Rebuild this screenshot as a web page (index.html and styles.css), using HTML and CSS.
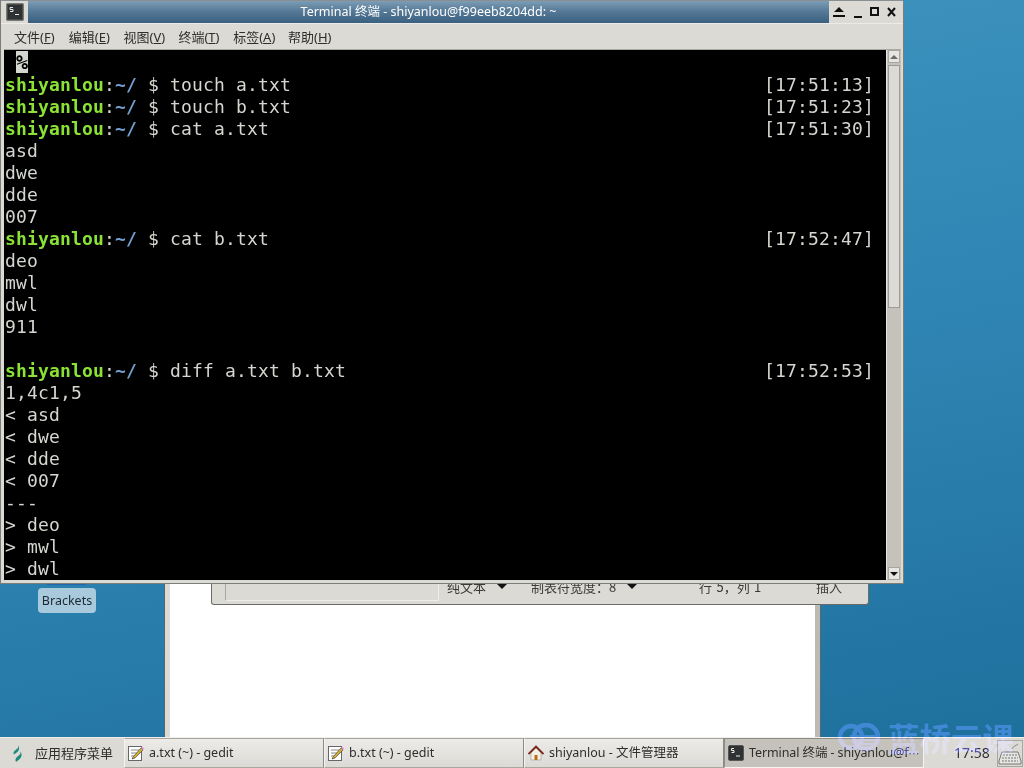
FILE: index.html
```html
<!DOCTYPE html>
<html lang="zh">
<head>
<meta charset="utf-8">
<title>Terminal</title>
<link rel="stylesheet" href="styles.css">
</head>
<body>
<div class="desktop">
  <div class="desk-icon"><div class="desk-icon-art"></div><div class="desk-icon-label">Brackets</div></div>

  <div class="gedit-back"></div>
  <div class="gedit-status">
    <div class="gs-field"></div>
    <span class="gs-item gs-plain">纯文本<i class="arrow"></i></span>
    <span class="gs-item gs-tab">制表符宽度：8<i class="arrow"></i></span>
    <span class="gs-item gs-pos">行 5，列 1</span>
    <span class="gs-item gs-ins">插入</span>
  </div>

  <div class="term-win">
    <div class="titlebar">
      <div class="win-icon"><svg width="18" height="18" viewBox="0 0 18 18"><rect x="0.5" y="0.5" width="17" height="17" rx="1" fill="#2e3232" stroke="#777b78"/><rect x="1.500" y="1.500" width="15" height="15" fill="none" stroke="#4a4e4e"/><path d="M4 4.500h3M4 6.500h3M4 4.500v2M7 6.500v2H4" stroke="#e8e8e8" fill="none"/><path d="M9 11.500h4" stroke="#e8e8e8"/></svg></div>
      <div class="title-text">Terminal 终端 - shiyanlou@f99eeb8204dd: ~</div>
      <div class="win-btns">
        <svg width="74" height="22" viewBox="0 0 74 22">
          <path d="M5 11l5-5 5 5z M4 14h12v2H4z" fill="#111"/>
          <path d="M25 15h8v2h-8z" fill="#111"/>
          <path d="M42 7h7v7h-7z" fill="none" stroke="#111" stroke-width="2"/>
          <path d="M59 7l7 8M66 7l-7 8" stroke="#111" stroke-width="2"/>
        </svg>
      </div>
    </div>
    <div class="menubar">
      <span class="menu-item">文件(<u>F</u>)</span><span class="menu-item">编辑(<u>E</u>)</span><span class="menu-item">视图(<u>V</u>)</span><span class="menu-item">终端(<u>T</u>)</span><span class="menu-item">标签(<u>A</u>)</span><span class="menu-item">帮助(<u>H</u>)</span>
    </div>
    <div class="term-body">
      <div class="term-screen">
        <div class="line"><span class="percent">%</span></div>
        <div class="line"><span><b class="g">shiyanlou</b><span>:</span><b class="b">~/</b> $ touch a.txt</span><span>[17:51:13]</span></div>
        <div class="line"><span><b class="g">shiyanlou</b><span>:</span><b class="b">~/</b> $ touch b.txt</span><span>[17:51:23]</span></div>
        <div class="line"><span><b class="g">shiyanlou</b><span>:</span><b class="b">~/</b> $ cat a.txt</span><span>[17:51:30]</span></div>
        <div class="line">asd</div>
        <div class="line">dwe</div>
        <div class="line">dde</div>
        <div class="line">007</div>
        <div class="line"><span><b class="g">shiyanlou</b><span>:</span><b class="b">~/</b> $ cat b.txt</span><span>[17:52:47]</span></div>
        <div class="line">deo</div>
        <div class="line">mwl</div>
        <div class="line">dwl</div>
        <div class="line">911</div>
        <div class="line"></div>
        <div class="line"><span><b class="g">shiyanlou</b><span>:</span><b class="b">~/</b> $ diff a.txt b.txt</span><span>[17:52:53]</span></div>
        <div class="line">1,4c1,5</div>
        <div class="line">&lt; asd</div>
        <div class="line">&lt; dwe</div>
        <div class="line">&lt; dde</div>
        <div class="line">&lt; 007</div>
        <div class="line">---</div>
        <div class="line">&gt; deo</div>
        <div class="line">&gt; mwl</div>
        <div class="line">&gt; dwl</div>
      </div>
      <div class="scrollbar">
        <div class="sb-btn"><i class="sb-up"></i></div>
        <div class="sb-thumb"></div>
        <div class="sb-track"></div>
        <div class="sb-btn"><i class="sb-down"></i></div>
      </div>
    </div>
  </div>

  <div class="taskbar">
    <div class="app-menu">
      <svg width="12" height="17" viewBox="0 0 12 17"><path d="M7.500 0C8 2.500 6 4 4 5.500 2.500 6.700 2 8 3 9.500 5.500 7.500 8 6.500 8 3.500 8 2 8 1 7.500 0z M9.500 6.500C10 9 8 10.500 6 12 4.500 13.200 4 15 5 17 7.500 15 11 13 10.500 9.500 10.300 8 10 7 9.500 6.500z" fill="#1d8a7c"/></svg>
      <span>应用程序菜单</span>
    </div>
    <div class="task"><svg class="t-ico" width="16" height="16" viewBox="0 0 16 16"><rect x="0.500" y="1.500" width="13" height="14" fill="#fff" stroke="#666"/><path d="M3 5h8M3 8h6M3 11h5" stroke="#888"/><path d="M5 12L13 3l2 2-8 8-3 1z" fill="#d8b030" stroke="#333" stroke-width="0.600"/><path d="M13 3l1-1.500 2 2-1 1.500z" fill="#e090d0"/></svg><span>a.txt (~) - gedit</span></div>
    <div class="task"><svg class="t-ico" width="16" height="16" viewBox="0 0 16 16"><rect x="0.500" y="1.500" width="13" height="14" fill="#fff" stroke="#666"/><path d="M3 5h8M3 8h6M3 11h5" stroke="#888"/><path d="M5 12L13 3l2 2-8 8-3 1z" fill="#d8b030" stroke="#333" stroke-width="0.600"/><path d="M13 3l1-1.500 2 2-1 1.500z" fill="#e090d0"/></svg><span>b.txt (~) - gedit</span></div>
    <div class="task"><svg class="t-ico" width="16" height="16" viewBox="0 0 16 16"><path d="M3 8v7h10V8L8 3z" fill="#f2efe6" stroke="#999" stroke-width="0.600"/><path d="M0.500 9L8 1.500 15.500 9" fill="none" stroke="#7a2418" stroke-width="1.800"/><rect x="6.500" y="10" width="3" height="5" fill="#c06a1c"/></svg><span>shiyanlou - 文件管理器</span></div>
    <div class="task task-active"><svg class="t-ico" width="16" height="16" viewBox="0 0 16 16"><rect x="0.500" y="0.500" width="15" height="15" rx="1.500" fill="#2e3232" stroke="#555"/><path d="M3.500 3.500h2.500M3.500 5.500h2.500M3.500 3.500v2M6 5.500v2H3.500" stroke="#eee" fill="none"/><path d="M8 11h4" stroke="#eee"/></svg><span class="task-label-tight">Terminal 终端 - shiyanlou@f<span class="ell">⋯</span></span></div>
    <div class="clock">17:58</div>
    <div class="kbd"><svg width="24" height="24" viewBox="0 0 24 24"><path d="M14 7c1-3 4-3 6-5" fill="none" stroke="#888"/><path d="M4 10h16l3 9v3H1v-3z" fill="#e6e6e2" stroke="#777"/><path d="M5 13h14M4 16h16M4 19h16" stroke="#999" stroke-width="1.500" stroke-dasharray="2 1"/></svg></div>
  </div>

  <div class="watermark">
    <svg class="wm-logo" width="43" height="28" viewBox="0 0 43 28"><circle cx="13" cy="14" r="11" fill="none" stroke="#26288f" stroke-width="4.500"/><circle cx="28" cy="14" r="12" fill="none" stroke="#26288f" stroke-width="4.500"/><path d="M12 13h30M14 17h26M17 21h20" stroke="#26288f" stroke-width="2"/></svg>
    <span class="wm-text">蓝桥云课</span>
  </div>
</div>
</body>
</html>
```
FILE: styles.css
```css
* { box-sizing: border-box; }
html, body { margin: 0; padding: 0; }
body { width: 1024px; height: 768px; overflow: hidden; font-family: "Liberation Sans", "Noto Sans CJK SC", sans-serif; }
.desktop { position: relative; width: 1024px; height: 768px; overflow: hidden; background: linear-gradient(170deg, #4097c0 0%, #2f85b3 50%, #1d6f9b 100%); }

.desk-icon { position: absolute; left: 38px; top: 560px; width: 58px; }
.desk-icon-art { position: absolute; left: 7px; top: 20px; width: 43px; height: 5px; background: #1e66b4; border-radius: 0 0 4px 4px; }
.desk-icon-label { position: absolute; left: 0; top: 28px; width: 58px; height: 25px; border-radius: 4px; background: #a9c9dd; color: #1c2a33; font: 12.500px/25px "Noto Sans", sans-serif; text-align: center; }

.gedit-back { position: absolute; left: 164px; top: 300px; width: 657px; height: 437px; background: #fff; border-left: 1px solid #58666e; border-right: 1px solid #58666e; box-shadow: inset 5px 0 0 #dcdad5, inset -5px 0 0 #bdbab3; }
.gedit-status { position: absolute; left: 211px; top: 540px; width: 658px; height: 65px; background: #dcdad5; border: 1px solid #6a6a66; border-top: 0; border-radius: 0 0 3px 3px; }
.gs-field { position: absolute; left: 13px; top: 20px; width: 214px; height: 41px; border-left: 1px solid #a8a69f; border-right: 1px solid #eeede9; border-bottom: 1px solid #eeede9; }
.gs-item { position: absolute; top: 38px; font: 13px/18px "Noto Sans CJK SC", sans-serif; color: #3a3a38; white-space: nowrap; }
.gs-plain { left: 235px; }
.gs-tab { left: 319px; }
.gs-pos { left: 487px; word-spacing: 1.500px; }
.gs-ins { left: 604px; }
.arrow { display: inline-block; margin-left: 11px; vertical-align: 3px; border-left: 5px solid transparent; border-right: 5px solid transparent; border-top: 5px solid #111; }

.term-win { position: absolute; left: 0; top: 0; width: 904px; height: 584px; background: #dcdad5; border: 1px solid #7d7d78; border-top: 0; border-radius: 0 4px 0 0; display: flex; flex-direction: column; }
.titlebar { display: flex; height: 23px; border-top: 1px solid #8a8f93; }
.win-icon { width: 27px; height: 22px; padding: 2px 0 0 5px; background: #dcdad5; }
.title-text { flex: 1; background: linear-gradient(#7d9db5, #567a97 45%, #3a6080); color: #fff; font: 12.500px/21px "Noto Sans", "Noto Sans CJK SC", sans-serif; text-align: center; }
.win-btns { width: 74px; background: #dcdad5; }
.menubar { display: flex; height: 26px; padding: 0 0 0 13px; border-top: 1px solid #ecebe7; font: 13px/27px "Noto Sans", "Noto Sans CJK SC", sans-serif; color: #2e2e2c; }
.menu-item { flex: none; width: 54.800px; white-space: nowrap; }
.term-body { flex: 1; display: flex; min-height: 0; margin: 0 2px 3px 3px; border-top: 1px solid #a9a7a1; }
.term-screen { width: 882px; padding: 2px 12px 0 1px; background: #000; color: #d3d7cf; font: 18px/22px "DejaVu Sans Mono", monospace; letter-spacing: 0.164px; overflow: hidden; }
.line { display: flex; justify-content: space-between; height: 22px; white-space: pre; }
.percent { margin: -1px 0 0 11px; width: 12px; height: 22px; background: #d3d7cf; color: #000; font-size: 20px; font-weight: bold; letter-spacing: 0; text-align: center; overflow: hidden; }
.g { color: #8ae234; font-weight: bold; }
.b { color: #729fcf; font-weight: bold; }

.scrollbar { width: 15px; display: flex; flex-direction: column; gap: 2px; background: #c4c2bb; padding: 0 1px; border-left: 1px solid #e8e7e3; }
.sb-btn { height: 13px; background: #e6e5e1; border: 1px solid #a8a69f; display: flex; align-items: center; justify-content: center; flex: none; }
.sb-up { border-left: 4px solid transparent; border-right: 4px solid transparent; border-bottom: 4px solid #6a6a66; }
.sb-down { border-left: 4px solid transparent; border-right: 4px solid transparent; border-top: 4px solid #111; }
.sb-thumb { height: 243px; background: #dcdad5; border: 1px solid #9c9a94; flex: none; }
.sb-track { flex: 1; }

.watermark { position: absolute; left: 838px; top: 723px; display: flex; align-items: center; gap: 7px; height: 28px; mix-blend-mode: screen; }
.wm-logo { flex: none; }
.wm-text { font: bold 31.500px/28px "Noto Sans CJK SC", sans-serif; color: #26288f; white-space: nowrap; }

.taskbar { position: absolute; left: 0; top: 737px; width: 1024px; height: 31px; background: #dcdad5; border-top: 1px solid #f0efec; display: flex; align-items: stretch; font: 12.500px/30px "Noto Sans", "Noto Sans CJK SC", sans-serif; color: #2e2e2c; }
.app-menu { width: 124px; display: flex; align-items: center; gap: 12px; padding-left: 11px; font-size: 13px; white-space: nowrap; }
.task { width: 200px; display: flex; align-items: center; gap: 5px; padding-left: 3px; white-space: nowrap; overflow: hidden; background: linear-gradient(#ecebe8, #dcdad5); border: 1px solid #a8a69f; border-left-color: #f4f3f0; border-right-color: #8e8c86; }
.t-ico { flex: none; }
.task-active { background: #c4c2bb; border-color: #8e8c86; border-right-color: #f4f3f0; border-bottom-color: #f4f3f0; }
.task-label-tight { letter-spacing: -0.100px; }
.ell { font-family: "DejaVu Sans", sans-serif; font-size: 11px; letter-spacing: 0; }
.clock { margin-left: 30px; width: 43px; font-size: 14px; }
.kbd { width: 26px; margin-top: 2px; height: 27px; border: 1px solid #a8a69f; display: flex; align-items: center; justify-content: center; }
```
